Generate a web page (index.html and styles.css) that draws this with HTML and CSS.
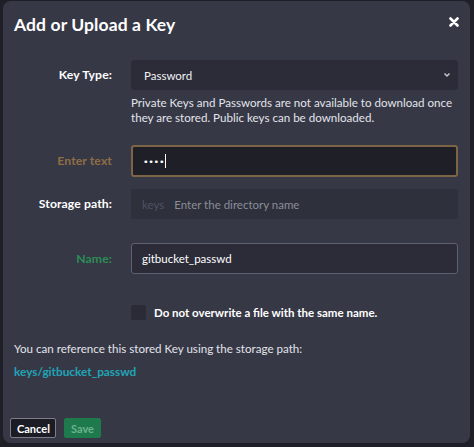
FILE: index.html
```html
<!DOCTYPE html>
<html>
<head>
<meta charset="utf-8">
<link rel="stylesheet" href="styles.css">
</head>
<body>
<div class="backdrop">
  <div class="modal">
    <div class="modal-header">
      <h1 class="title">Add or Upload a Key</h1>
      <button class="close" aria-label="Close">
        <svg width="10" height="10" viewBox="0 0 10 10"><path d="M1.5 1.5 L8.5 8.5 M8.5 1.5 L1.5 8.5" stroke="#ffffff" stroke-width="2.6" stroke-linecap="round"/></svg>
      </button>
    </div>
    <div class="modal-body">
      <div class="row row-type">
        <label class="label">Key Type:</label>
        <div class="field">
          <div class="select">
            <span>Password</span>
            <svg width="8" height="6" viewBox="0 0 8 6"><path d="M1.5 1.5 L4 4 L6.5 1.5" stroke="#c9cad2" stroke-width="1.4" fill="none"/></svg>
          </div>
          <p class="help">Private Keys and Passwords are not available to download once they are stored. Public keys can be downloaded.</p>
        </div>
      </div>
      <div class="row row-text">
        <label class="label label-warn">Enter text</label>
        <div class="field">
          <div class="input input-focus"><span class="dots">••••</span><span class="caret"></span></div>
        </div>
      </div>
      <div class="row row-path">
        <label class="label">Storage path:</label>
        <div class="field">
          <div class="input input-path"><span class="prefix">keys</span><span class="placeholder">Enter the directory name</span></div>
        </div>
      </div>
      <div class="row row-name">
        <label class="label label-ok">Name:</label>
        <div class="field">
          <div class="input input-name">gitbucket_passwd</div>
        </div>
      </div>
      <div class="row row-check">
        <div class="label"></div>
        <div class="field check-field">
          <span class="checkbox"></span>
          <span class="check-label">Do not overwrite a file with the same name.</span>
        </div>
      </div>
      <p class="ref">You can reference this stored Key using the storage path:</p>
      <p class="link">keys/gitbucket_passwd</p>
    </div>
    <div class="modal-footer">
      <button class="btn btn-cancel">Cancel</button>
      <button class="btn btn-save">Save</button>
    </div>
  </div>
</div>
</body>
</html>
```

FILE: styles.css
```css
* { box-sizing: border-box; }
html, body {
  margin: 0;
  padding: 0;
  background: #1f2027;
  font-family: "Lato", "Noto Sans", sans-serif;
  color: #e8e9ee;
}
.backdrop {
  width: 474px;
  height: 447px;
  padding: 1px 4px 4px 3px;
}
.modal {
  height: 442px;
  background: #363846;
  border-radius: 8px;
  display: flex;
  flex-direction: column;
}
.modal-header {
  display: flex;
  justify-content: space-between;
  align-items: flex-start;
  padding: 12px 11px 0 11px;
  height: 48px;
}
.title {
  margin: 0;
  font-size: 17.5px;
  font-weight: 700;
  color: #ffffff;
  line-height: 24px;
  letter-spacing: 0.1px;
}
.close {
  border: 0;
  background: transparent;
  padding: 0;
  margin: 4px 0 0 0;
  width: 10px;
  height: 10px;
  display: flex;
}
.modal-body {
  padding: 11px 12px 0 11px;
  flex: 1;
}
.row {
  display: flex;
  align-items: flex-start;
}
.label {
  width: 98px;
  flex: none;
  text-align: right;
  font-size: 12.2px;
  font-weight: 700;
  color: #ffffff;
  margin-right: 19px;
  letter-spacing: 0.1px;
}
.field {
  flex: 1;
}
.row-type .label { line-height: 30px; }
.select {
  height: 30px;
  background: #2b2c38;
  border-radius: 3px;
  display: flex;
  align-items: center;
  justify-content: space-between;
  padding: 0 7px 0 13px;
  font-size: 11.5px;
  color: #f2f2f5;
}
.help {
  margin: 5px 0 0 0;
  font-size: 11.6px;
  line-height: 15px;
  color: #e3e4ea;
}
.row-text { margin-top: 20px; }
.row-text .label { line-height: 32px; }
.label-warn { color: #8f6e44; }
.input {
  height: 30px;
  border-radius: 3px;
  display: flex;
  align-items: center;
  font-size: 11.5px;
}
.input-focus {
  height: 32px;
  background: #1e1f27;
  border: 2px solid #7e6447;
  padding-left: 10px;
  color: #ffffff;
}
.dots {
  font-size: 9.5px;
  letter-spacing: -0.3px;
  font-family: "DejaVu Sans", sans-serif;
}
.caret {
  display: inline-block;
  width: 1px;
  height: 14px;
  background: #ffffff;
  margin-left: 1px;
}
.row-path { margin-top: 12px; }
.row-path .label { line-height: 30px; }
.input-path {
  background: #2e303c;
  padding-left: 11px;
}
.prefix {
  color: #4f5262;
  margin-right: 10px;
}
.placeholder {
  color: #8b8d99;
}
.row-name { margin-top: 24px; }
.row-name .label { line-height: 31px; }
.label-ok { color: #2c8d55; }
.input-name {
  height: 31px;
  background: #2b2c38;
  border: 1px solid #5e6171;
  padding-left: 10px;
  color: #ffffff;
}
.row-check { margin-top: 31px; }
.check-field {
  display: flex;
  align-items: center;
}
.checkbox {
  width: 15px;
  height: 15px;
  background: #2a2b37;
  border-radius: 2px;
  margin-right: 8px;
}
.check-label {
  font-size: 11.5px;
  font-weight: 700;
  color: #ffffff;
}
.ref {
  margin: 21px 0 0 0;
  font-size: 11.6px;
  line-height: 15px;
  color: #e3e4ea;
}
.link {
  margin: 8px 0 0 0;
  font-size: 11.8px;
  line-height: 15px;
  color: #21a5b6;
  font-weight: 700;
}
.modal-footer {
  display: flex;
  gap: 8px;
  padding: 0 0 5px 7px;
}
.btn {
  font-family: "Lato", "Noto Sans", sans-serif;
  font-size: 11px;
  font-weight: 700;
  height: 20px;
  border-radius: 2px;
  padding: 0 6px;
  cursor: pointer;
}
.btn-cancel {
  background: #1c1d24;
  border: 1px solid #7b7e89;
  color: #ffffff;
  width: 46px;
}
.btn-save {
  background: #1e7a4d;
  border: 1px solid #1e7a4d;
  color: #6bb28c;
  width: 37px;
}
```
